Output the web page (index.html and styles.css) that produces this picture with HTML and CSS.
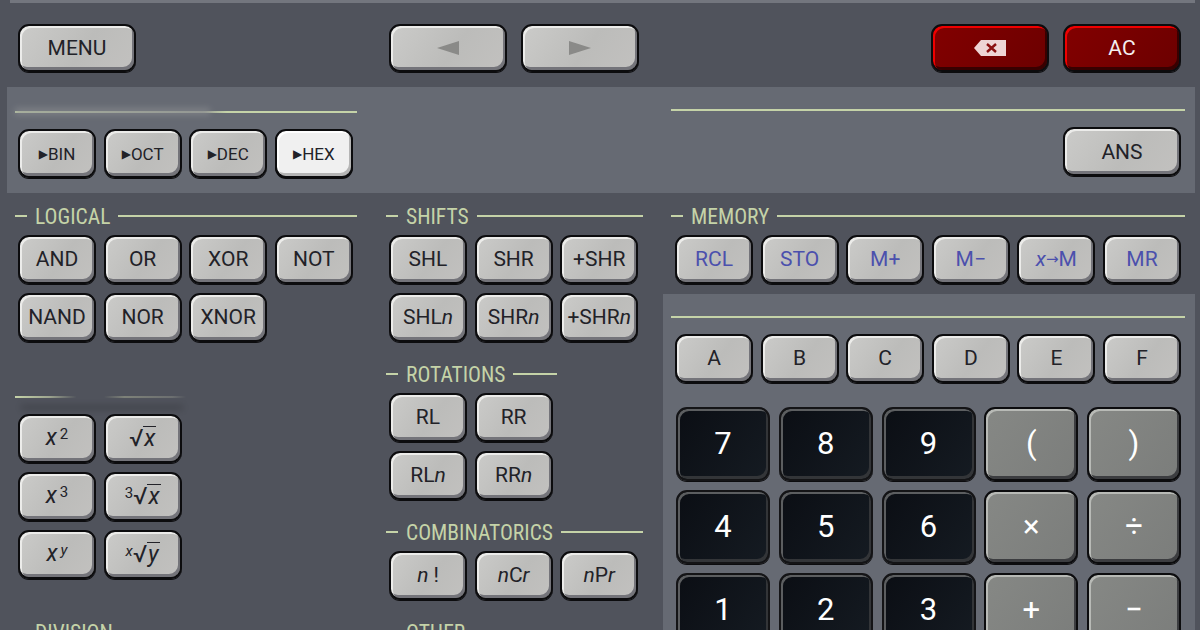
FILE: index.html
```html
<!DOCTYPE html>
<html lang="en">
<head>
    <meta charset="UTF-8">
    <title>Programmer Calculator</title>
    <link rel="stylesheet" href="styles.css">
</head>
<body>

<div class="calc">
    <div class="topstrip"></div>

    <div class="toolbar">
        <div><button class="key wide">MENU</button></div>
        <div class="group">
            <button class="key wide">
                <svg class="arrow" viewBox="0 0 22 14"><path d="M0 7 22 0V14Z"/></svg>
            </button>
            <button class="key wide">
                <svg class="arrow" viewBox="0 0 22 14"><path d="M22 7 0 0V14Z"/></svg>
            </button>
        </div>
        <div class="group">
            <button class="key wide red">
                <svg class="bksp" viewBox="0 0 32 16"><path class="bksp-tag" d="M0 8 7 0H32V16H7Z"/><path class="bksp-x" d="M13 4 22 12M22 4 13 12"/></svg>
            </button>
            <button class="key wide red">AC</button>
        </div>
    </div>

    <div class="display">
        <div class="display-left">
            <div class="rule smudged"></div>
            <div class="keys keys-4">
                <button class="key mode"><span class="tri">&#9654;</span>BIN</button>
                <button class="key mode"><span class="tri">&#9654;</span>OCT</button>
                <button class="key mode"><span class="tri">&#9654;</span>DEC</button>
                <button class="key mode active"><span class="tri">&#9654;</span>HEX</button>
            </div>
        </div>
        <div class="display-right">
            <div class="rule"></div>
            <button class="key wide ans">ANS</button>
        </div>
    </div>

    <div class="main">
        <div class="col col-a">
            <h3 class="heading">LOGICAL</h3>
            <div class="keys keys-4">
                <button class="key">AND</button>
                <button class="key">OR</button>
                <button class="key">XOR</button>
                <button class="key">NOT</button>
                <button class="key">NAND</button>
                <button class="key">NOR</button>
                <button class="key">XNOR</button>
            </div>

            <div class="rule faded"></div>
            <div class="keys keys-2">
                <button class="key math"><i>x</i><sup>2</sup></button>
                <button class="key math"><span class="radical">&radic;</span><span class="root"><i>x</i></span></button>
                <button class="key math"><i>x</i><sup>3</sup></button>
                <button class="key math"><sup class="idx">3</sup><span class="radical">&radic;</span><span class="root"><i>x</i></span></button>
                <button class="key math"><i>x</i><sup><i>y</i></sup></button>
                <button class="key math"><sup class="idx"><i>x</i></sup><span class="radical">&radic;</span><span class="root"><i>y</i></span></button>
            </div>

            <h3 class="heading division">DIVISION</h3>
        </div>

        <div class="col col-b">
            <h3 class="heading">SHIFTS</h3>
            <div class="keys keys-3">
                <button class="key">SHL</button>
                <button class="key">SHR</button>
                <button class="key">+SHR</button>
                <button class="key">SHL<i>n</i></button>
                <button class="key">SHR<i>n</i></button>
                <button class="key">+SHR<i>n</i></button>
            </div>

            <h3 class="heading next short">ROTATIONS</h3>
            <div class="keys keys-3">
                <button class="key">RL</button>
                <button class="key">RR</button>
                <span></span>
                <button class="key">RL<i>n</i></button>
                <button class="key">RR<i>n</i></button>
            </div>

            <h3 class="heading next">COMBINATORICS</h3>
            <div class="keys keys-3">
                <button class="key"><i class="fact">n</i>!</button>
                <button class="key"><i>n</i>C<i>r</i></button>
                <button class="key"><i>n</i>P<i>r</i></button>
            </div>

            <h3 class="heading next">OTHER</h3>
        </div>

        <div class="col col-c">
            <h3 class="heading">MEMORY</h3>
            <div class="keys keys-6">
                <button class="key mem">RCL</button>
                <button class="key mem">STO</button>
                <button class="key mem">M+</button>
                <button class="key mem">M&minus;</button>
                <button class="key mem"><i>x</i><span class="to">&rarr;</span>M</button>
                <button class="key mem">MR</button>
            </div>

            <div class="keypad">
                <div class="rule"></div>
                <div class="keys keys-6">
                    <button class="key">A</button>
                    <button class="key">B</button>
                    <button class="key">C</button>
                    <button class="key">D</button>
                    <button class="key">E</button>
                    <button class="key">F</button>
                </div>
                <div class="numpad">
                    <button class="key num">7</button>
                    <button class="key num">8</button>
                    <button class="key num">9</button>
                    <button class="key op">(</button>
                    <button class="key op">)</button>
                    <button class="key num">4</button>
                    <button class="key num">5</button>
                    <button class="key num">6</button>
                    <button class="key op">&times;</button>
                    <button class="key op">&divide;</button>
                    <button class="key num">1</button>
                    <button class="key num">2</button>
                    <button class="key num">3</button>
                    <button class="key op">+</button>
                    <button class="key op">&minus;</button>
                </div>
            </div>
        </div>
    </div>
</div>

</body>
</html>
```

FILE: styles.css
```css
html, body {
    margin: 0;
    padding: 0;
}

body {
    font-family: Roboto, "Liberation Sans", sans-serif;
    background-color: #50535c;
}

.calc {
    width: 1200px;
    height: 630px;
    overflow: hidden;
}

.topstrip {
    height: 3px;
    margin: 0 5px 0 10px;
    background-color: #73767e;
}

.toolbar {
    display: grid;
    grid-template-columns: 371px 542px auto;
    height: 63px;
    padding: 21px 0 0 18px;
}

.group {
    display: flex;
    gap: 14px;
}

/* keys */
.key {
    display: flex;
    align-items: center;
    justify-content: center;
    height: 49px;
    width: 78px;
    padding: 0 0 2px 0;
    box-sizing: border-box;
    border: 2px solid #0c0c0e;
    border-radius: 11px;
    background: linear-gradient(125deg, #cbcbc9 0%, #bcbcba 55%, #c2c1bf 100%);
    box-shadow: inset 2px 2px 0 #ececea, inset -2px -3px 0 #74747a, 0 1px 0 #0c0c0e;
    color: #222228;
    font-family: inherit;
    font-size: 21px;
    white-space: nowrap;
}

.key.wide {
    width: 118px;
    height: 48px;
    padding: 0;
}

.key.red {
    background: linear-gradient(125deg, #820000 0%, #6c0000 100%);
    box-shadow: inset 2px 2px 0 #f00000, inset -2px -3px 0 #380000, 0 1px 0 #0c0c0e;
    color: #f4eeee;
}

.key.mode {
    padding: 0;
    font-size: 17px;
}

.key.active {
    background: #f0f0f0;
    box-shadow: inset 2px 2px 0 #ffffff, inset -2px -3px 0 #b5b5b5, 0 1px 0 #0c0c0e;
}

.key.mem {
    color: #4b50ad;
}

.key.num {
    width: 94px;
    height: 74px;
    background: linear-gradient(125deg, #0b0e14 0%, #151b22 100%);
    border-color: #141416;
    box-shadow: inset 2px 2px 0 #5c5e60, inset -2px -3px 0 #333538, 0 1px 0 #0c0c0e;
    color: #ffffff;
    font-size: 31px;
}

.key.op {
    width: 94px;
    height: 74px;
    background: linear-gradient(125deg, #868885 0%, #7b7d7b 100%);
    box-shadow: inset 2px 2px 0 #b8bab6, inset -2px -3px 0 #3c3d40, 0 1px 0 #0c0c0e;
    color: #ffffff;
    font-size: 31px;
}

.tri {
    font-family: "DejaVu Sans", sans-serif;
    font-size: 12px;
}

.to {
    font-family: "DejaVu Sans", sans-serif;
    font-size: 15px;
}

.key.math {
    font-size: 23px;
}

.fact {
    margin-right: 5px;
}

sup {
    font-size: 15px;
    line-height: 0;
    position: relative;
    top: -4px;
    vertical-align: super;
    margin-left: 3px;
}

sup.idx {
    margin: 0;
    top: -3px;
}

.radical {
    font-size: 24px;
}

.root {
    border-top: 1px solid #222228;
    line-height: 23px;
    padding: 0 1px;
}

.arrow {
    width: 22px;
    height: 14px;
    fill: #8a8a88;
}

.bksp {
    width: 32px;
    height: 16px;
}

.bksp-tag {
    fill: #eed5d5;
}

.bksp-x {
    fill: none;
    stroke: #8a1010;
    stroke-width: 2.4;
}

.keys {
    display: grid;
    gap: 9px 7.6px;
}

.keys-2 {
    grid-template-columns: repeat(2, 78px);
}

.keys-3 {
    grid-template-columns: repeat(3, 78px);
}

.keys-4 {
    grid-template-columns: repeat(4, 78px);
}

.keys-6 {
    grid-template-columns: repeat(6, 78px);
}

/* display band */
.display {
    display: flex;
    height: 106px;
    margin: 0 5px 0 7px;
    background-color: #666a73;
}

.display-left {
    width: 342px;
    margin-left: 8px;
    padding-top: 24px;
}

.display-left .rule {
    margin-bottom: 16px;
}

.display-left .keys {
    padding-left: 3px;
}

.display-right {
    display: flex;
    flex-direction: column;
    align-items: flex-end;
    width: 514px;
    margin-left: 314px;
    padding-top: 22px;
}

.display-right .rule {
    width: 100%;
    margin-bottom: 16px;
}

.display-right .ans {
    margin-right: 4px;
    height: 49px;
}

.rule {
    position: relative;
    height: 2px;
    background-color: #c5d3a8;
}

.rule.smudged {
    background: linear-gradient(90deg, #b9c4a4 0%, #9a9e96 55%, #c5d3a8 62%);
}

.rule.smudged::after {
    content: "";
    position: absolute;
    left: 0;
    top: -3px;
    width: 195px;
    height: 7px;
    background-color: #8d9093;
    filter: blur(3px);
    opacity: 0.6;
}

.rule.faded {
    margin: 54px 0 16px;
    background: linear-gradient(90deg, #c5d3a8 0%, #9ea58f 10%, #50535c 18%, #50535c 26%, #7e8279 32%, #6c6f70 46%, transparent 50%);
}

.rule.faded::after {
    content: "";
    position: absolute;
    left: 6px;
    top: 9px;
    width: 162px;
    height: 5px;
    background-color: #33353a;
    filter: blur(3px);
    opacity: 0.45;
}

/* lower columns */
.main {
    display: flex;
    padding: 13px 0 0 15px;
}

.col-a {
    width: 342px;
    margin-right: 29px;
}

.col-b {
    width: 257px;
    margin-right: 20px;
}

.col-c {
    width: 532px;
}

.col-a .keys,
.col-b .keys {
    padding-left: 3px;
}

.heading {
    display: flex;
    align-items: center;
    gap: 8px;
    height: 20px;
    margin: 0 0 9px 0;
    color: #c5d3a8;
    font-size: 21.5px;
    font-weight: 400;
    font-stretch: condensed;
}

.heading::before {
    content: "";
    flex: 0 0 12px;
    height: 2px;
    background-color: #c5d3a8;
}

.heading::after {
    content: "";
    flex: 1;
    height: 2px;
    background-color: #c5d3a8;
}

.heading.next {
    margin-top: 22px;
}

.heading.short {
    width: 171px;
}

.heading.division {
    margin-top: 43px;
}

.col-c .heading {
    margin-left: 8px;
    margin-right: 10px;
}

.col-c > .keys {
    padding-left: 12px;
}

.keypad {
    height: 336px;
    margin-top: 10px;
    padding-top: 22px;
    box-sizing: border-box;
    background-color: #666a73;
}

.keypad .rule {
    margin: 0 10px 16px 8px;
}

.keypad .keys {
    padding-left: 12px;
}

.numpad {
    display: grid;
    grid-template-columns: repeat(5, 94px);
    gap: 9px 8.75px;
    margin-top: 24px;
    padding-left: 13px;
}
```
